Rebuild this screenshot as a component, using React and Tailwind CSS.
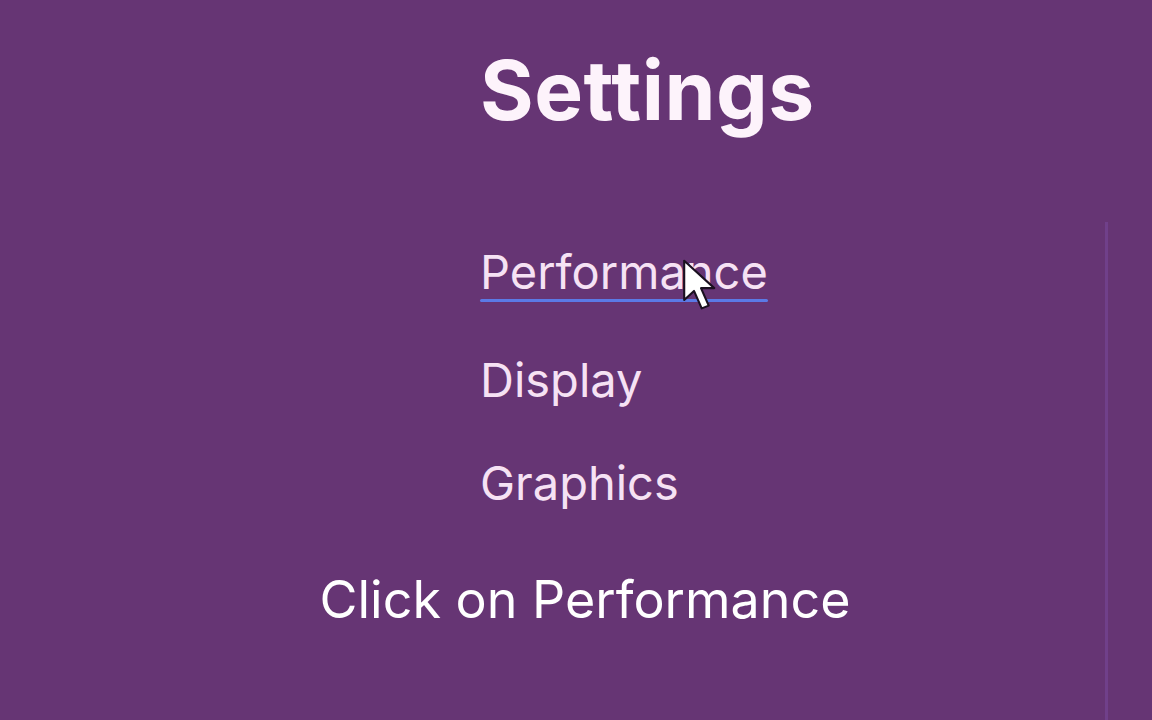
export default function App() {
  return (
    <div className="relative flex h-[720px] w-[1152px] flex-col overflow-hidden bg-[#663574] font-['Inter',sans-serif]">
      {/* faint divider on the right */}
      <div className="absolute right-[44px] top-[222px] h-[498px] w-[3px] bg-[#70408a]" />

      {/* settings menu */}
      <div className="ml-[480px] flex flex-col pt-[50px]">
        <h1 className="text-[82px] font-bold leading-none tracking-[0.5px] text-[#fdf3fb]">
          Settings
        </h1>
        <nav className="mt-[116px] flex flex-col gap-[56px] text-[47px] leading-none text-[#f6e2f4]">
          <div className="relative w-fit">
            <span className="block pb-[4px]">Performance</span>
            <div className="h-[3px] w-full rounded bg-[#5b7ae6]" />
            {/* mouse pointer */}
            <svg
              className="absolute left-[200px] top-[6px]"
              width="42"
              height="64"
              viewBox="0 0 30 40"
            >
              <path
                d="M3 2 L3 30 L10 23.5 L15.5 36 L20.5 34 L15 21.5 L24.5 21.5 Z"
                fill="#ffffff"
                stroke="#1a1020"
                strokeWidth="1.5"
                strokeLinejoin="round"
              />
            </svg>
          </div>
          <div className="-mt-[2px]">Display</div>
          <div>Graphics</div>
        </nav>
      </div>

      {/* caption */}
      <div className="mt-[68px] flex justify-center pl-[18px] text-[52px] leading-none text-white">
        Click on Performance
      </div>
    </div>
  );
}
